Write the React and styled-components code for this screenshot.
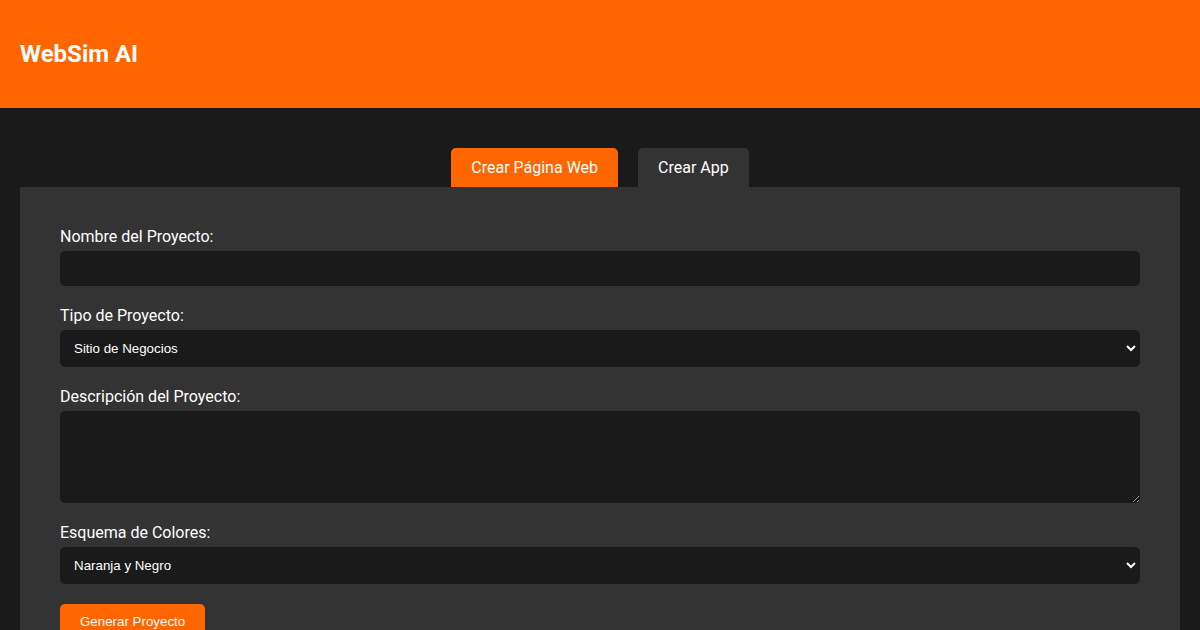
import styled, { createGlobalStyle } from "styled-components";

const GlobalStyle = createGlobalStyle`
  body {
    margin: 0;
    background: #1a1a1a;
    color: #ffffff;
    font-family: Roboto, "Liberation Sans", Arial, sans-serif;
  }
`;

const Header = styled.header`
  background: #ff6600;
  padding: 40px 20px;
`;

const Title = styled.h1`
  margin: 0;
  font-size: 24px;
  line-height: 28px;
  font-weight: 700;
  color: #ffffff;
`;

const Main = styled.main`
  padding: 40px 20px 0;
`;

const Tabs = styled.div`
  display: flex;
  justify-content: center;
  gap: 20px;
`;

const Tab = styled.button`
  border: none;
  border-radius: 5px 5px 0 0;
  padding: 10px 20px;
  height: 39px;
  font-family: Roboto, "Liberation Sans", Arial, sans-serif;
  font-size: 16px;
  color: #ffffff;
  background: ${(props) => (props.$active ? "#ff6600" : "#333333")};
  cursor: pointer;
`;

const Panel = styled.form`
  background: #333333;
  padding: 40px 40px 40px;
  display: flex;
  flex-direction: column;
`;

const Field = styled.div`
  display: flex;
  flex-direction: column;
  margin-bottom: 20px;
`;

const Label = styled.label`
  font-size: 16px;
  line-height: 19px;
  margin-bottom: 5px;
`;

const TextInput = styled.input`
  box-sizing: border-box;
  height: 35px;
  border: none;
  border-radius: 5px;
  background: #1a1a1a;
  color: #ffffff;
  padding: 8px;
`;

const Select = styled.select`
  box-sizing: border-box;
  height: 37px;
  border: 1px solid #1a1a1a;
  border-radius: 5px;
  background: #1a1a1a;
  color: #ffffff;
  padding: 0 9px;
  font-family: "Liberation Sans", Arial, sans-serif;
  font-size: 13.33px;
  color-scheme: dark;
`;

const TextArea = styled.textarea`
  box-sizing: border-box;
  height: 92px;
  border: none;
  border-radius: 5px;
  background: #1a1a1a;
  color: #ffffff;
  padding: 10px;
  color-scheme: dark;
`;

const SubmitButton = styled.button`
  align-self: flex-start;
  border: none;
  border-radius: 5px;
  background: #ff6600;
  color: #ffffff;
  padding: 10px 20px;
  font-family: "Liberation Sans", Arial, sans-serif;
  font-size: 13.33px;
  cursor: pointer;
`;

export default function App() {
  return (
    <>
      <GlobalStyle />
      <Header>
        <Title>WebSim AI</Title>
      </Header>
      <Main>
        <Tabs>
          <Tab type="button" $active>
            Crear Página Web
          </Tab>
          <Tab type="button">Crear App</Tab>
        </Tabs>
        <Panel onSubmit={(e) => e.preventDefault()}>
          <Field>
            <Label htmlFor="name">Nombre del Proyecto:</Label>
            <TextInput id="name" type="text" />
          </Field>
          <Field>
            <Label htmlFor="type">Tipo de Proyecto:</Label>
            <Select id="type" defaultValue="business">
              <option value="business">Sitio de Negocios</option>
              <option value="portfolio">Portafolio</option>
              <option value="blog">Blog</option>
              <option value="shop">Tienda en Línea</option>
            </Select>
          </Field>
          <Field>
            <Label htmlFor="desc">Descripción del Proyecto:</Label>
            <TextArea id="desc" />
          </Field>
          <Field>
            <Label htmlFor="colors">Esquema de Colores:</Label>
            <Select id="colors" defaultValue="orange">
              <option value="orange">Naranja y Negro</option>
              <option value="blue">Azul y Blanco</option>
              <option value="green">Verde y Gris</option>
            </Select>
          </Field>
          <SubmitButton type="submit">Generar Proyecto</SubmitButton>
        </Panel>
      </Main>
    </>
  );
}
